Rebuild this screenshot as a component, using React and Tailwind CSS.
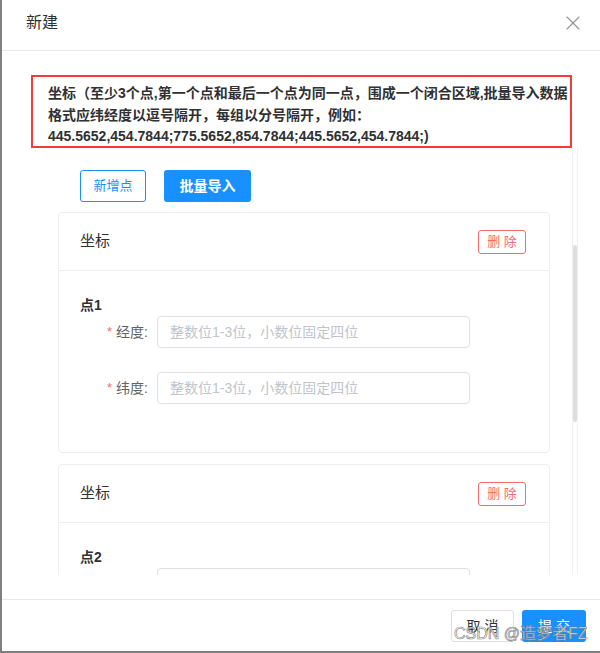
import { X } from "lucide-react";

const font = { fontFamily: '"Liberation Sans", "Noto Sans CJK SC", sans-serif' };

function FormRow({ label, className = "" }) {
  return (
    <div className={`flex items-center h-[32px] ${className}`}>
      <div className="w-[77px] pr-[9px] flex justify-end items-center text-[14px] text-[#606266]">
        <span className="text-[#f56c6c] mr-[4px] text-[13px]">*</span>
        <span>{label}:</span>
      </div>
      <div className="w-[313px] h-[32px] border border-[#dcdfe6] rounded-[4px] px-[12px] flex items-center text-[14px] text-[#c0c4cc]">
        整数位1-3位，小数位固定四位
      </div>
    </div>
  );
}

function PointCard({ name, className = "" }) {
  return (
    <div className={`w-[492px] border border-[#ebeef5] rounded-[4px] bg-white shrink-0 ${className}`}>
      <div className="h-[58px] border-b border-[#ebeef5] flex items-center justify-between pl-[21px] pr-[23px]">
        <span className="text-[15px] text-[#303133]">坐标</span>
        <button className="w-[48px] h-[24px] border border-[#f56c6c] rounded-[3px] text-[13px] text-[#f56c6c] flex items-center justify-center">
          删 除
        </button>
      </div>
      <div className="pl-[21px] pt-[24px] pb-[48px]">
        <div className="text-[14px] font-bold text-[#303133] leading-[20px]">{name}</div>
        <FormRow label="经度" className="mt-[1px]" />
        <FormRow label="纬度" className="mt-[24px]" />
      </div>
    </div>
  );
}

export default function App() {
  return (
    <div
      className="relative w-[600px] h-[653px] bg-white border-l-2 border-b-2 border-[#7f7f7f] flex flex-col overflow-hidden"
      style={font}
    >
      {/* header */}
      <div className="h-[51px] shrink-0 border-b border-[#e8e8e8] flex items-center justify-between pl-[24px] pr-[15px] pb-[4px]">
        <span className="text-[16px] text-[#303133]">新建</span>
        <X size={24} strokeWidth={1.1} className="text-[#909399]" />
      </div>

      {/* tip */}
      <div className="ml-[29px] mt-[24px] w-[541px] h-[73px] shrink-0 border-2 border-[#f23b3b] pl-[15px] pt-[6px] text-[14px] font-bold text-[#303133] leading-[21.5px]">
        <div>坐标（至少3个点,第一个点和最后一个点为同一点，围成一个闭合区域,批量导入数据</div>
        <div>格式应纬经度以逗号隔开，每组以分号隔开，例如：</div>
        <div>445.5652,454.7844;775.5652,854.7844;445.5652,454.7844;)</div>
      </div>

      {/* scroll area */}
      <div className="flex h-[427px] shrink-0">
        <div className="flex-1 overflow-hidden pl-[56px] pt-[22px] flex flex-col">
          <div className="flex gap-[18px] ml-[22px] shrink-0">
            <button className="w-[66px] h-[32px] border border-[#1890ff] rounded-[3px] text-[13px] text-[#1890ff] flex items-center justify-center">
              新增点
            </button>
            <button className="w-[87px] h-[32px] bg-[#1890ff] rounded-[3px] text-[14px] font-bold text-white flex items-center justify-center">
              批量导入
            </button>
          </div>
          <PointCard name="点1" className="mt-[10px]" />
          <PointCard name="点2" className="mt-[11px]" />
        </div>
        <div className="w-[6px] mr-[22px] border-x border-[#f0f0f0] flex flex-col">
          <div className="h-[97px]" />
          <div className="h-[177px] bg-[#dedede] rounded-[2px]" />
        </div>
      </div>

      {/* footer */}
      <div className="mt-auto h-[52px] shrink-0 border-t border-[#e8e8e8] flex justify-end items-start pt-[10px] pr-[14px] gap-[8px]">
        <button className="w-[63px] h-[32px] border border-[#dcdfe6] rounded-[3px] text-[14px] text-[#303133] flex items-center justify-center">
          取 消
        </button>
        <button className="w-[64px] h-[32px] bg-[#1890ff] rounded-[3px] text-[14px] text-white flex items-center justify-center">
          提 交
        </button>
      </div>

      {/* watermark */}
      <div className="absolute left-[452px] top-[624px] text-[16px] leading-[20px] text-white/80 [-webkit-text-stroke:0.6px_#7a7a7a] pointer-events-none">
        CSDN @造梦者FZ
      </div>
    </div>
  );
}
